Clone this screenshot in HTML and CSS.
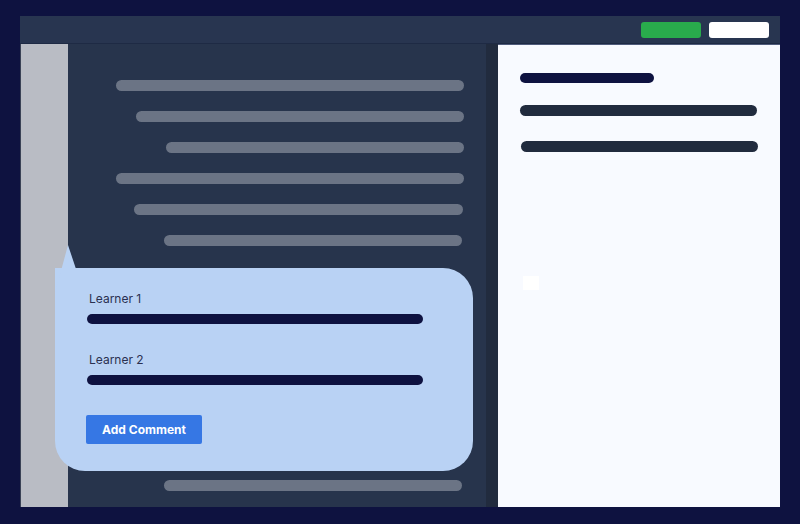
FILE: index.html
```html
<!DOCTYPE html>
<html>
<head>
<meta charset="utf-8">
<link rel="stylesheet" href="styles.css">
</head>
<body>
<div class="frame">
  <div class="topbar">
    <span class="btn-green"></span>
    <span class="btn-white"></span>
  </div>
  <div class="main">
    <div class="gutter"></div>
    <div class="editor">
      <div class="lines">
        <div class="line" style="margin-left:48px;width:348px"></div>
        <div class="line" style="margin-left:68px;width:328px"></div>
        <div class="line" style="margin-left:98px;width:298px"></div>
        <div class="line" style="margin-left:48px;width:348px"></div>
        <div class="line" style="margin-left:66px;width:329px"></div>
        <div class="line" style="margin-left:96px;width:298px"></div>
      </div>
      <div class="line last" style="margin-left:96px;width:298px"></div>
    </div>
    <div class="divider"></div>
    <div class="preview">
      <div class="pline title"></div>
      <div class="pline"></div>
      <div class="pline second"></div>
      <div class="square"></div>
    </div>
  </div>
  <div class="bubble">
    <svg class="tail" width="30" height="50" viewBox="0 0 30 50"><polygon points="0,48 13,0 21,24 30,24 30,50 0,50" fill="#b9d2f4"/></svg>
    <div class="comment">
      <div class="name">Learner 1</div>
      <div class="bar"></div>
    </div>
    <div class="comment">
      <div class="name">Learner 2</div>
      <div class="bar"></div>
    </div>
    <button class="add">Add Comment</button>
  </div>
</div>
</body>
</html>
```
FILE: styles.css
```css
html, body {
  margin: 0;
  padding: 0;
  background: #0e1240;
  font-family: Inter, "Noto Sans", sans-serif;
}
.frame {
  position: relative;
  margin: 16px 20px 0 20px;
  width: 760px;
  height: 491px;
  display: flex;
  flex-direction: column;
}
.topbar {
  height: 28px;
  background: #283550;
  display: flex;
  justify-content: flex-end;
  align-items: flex-start;
  gap: 8px;
  padding: 6px 11px 0 0;
  box-sizing: border-box;
  border-bottom: 1px solid #1e2a44;
}
.btn-green {
  width: 60px;
  height: 16px;
  background: #29ab4c;
  border-radius: 3px;
}
.btn-white {
  width: 60px;
  height: 16px;
  background: #ffffff;
  border-radius: 3px;
}
.main {
  flex: 1;
  display: flex;
}
.gutter {
  width: 47px;
  background: #b9bcc4;
  border-left: 1px solid #3a4256;
}
.editor {
  width: 418px;
  background: #27344c;
  display: flex;
  flex-direction: column;
}
.lines {
  display: flex;
  flex-direction: column;
  gap: 20px;
  padding-top: 36px;
}
.line {
  height: 11px;
  border-radius: 6px;
  background: #6b7485;
}
.line.last {
  margin-top: auto;
  margin-bottom: 16px;
}
.divider {
  width: 12px;
  background: #212b3e;
}
.preview {
  flex: 1;
  background: #f8faff;
  border-top: 1px solid #4e5a7a;
  display: flex;
  flex-direction: column;
  padding: 28px 22px 0 22px;
}
.pline {
  height: 11px;
  border-radius: 6px;
  background: #212b3e;
  width: 237px;
  margin-bottom: 25px;
}
.pline.title {
  width: 134px;
  height: 10px;
  background: #0e1240;
  margin-bottom: 22px;
}
.pline.second {
  margin-left: 1px;
  margin-bottom: 124px;
}
.square {
  width: 16px;
  height: 14px;
  background: #ffffff;
  margin-left: 3px;
}
.bubble {
  position: absolute;
  left: 35px;
  top: 252px;
  width: 418px;
  height: 203px;
  box-sizing: border-box;
  background: #b9d2f4;
  border-radius: 0 30px 30px 30px;
  padding: 24px 0 0 32px;
  display: flex;
  flex-direction: column;
}
.tail {
  position: absolute;
  left: 0;
  top: -23px;
}
.comment {
  display: flex;
  flex-direction: column;
  margin-bottom: 29px;
}
.name {
  font-size: 12px;
  line-height: 14px;
  color: #2a3050;
  margin-left: 2px;
  margin-bottom: 8px;
}
.bar {
  width: 336px;
  height: 10px;
  border-radius: 5px;
  background: #0e1240;
}
.add {
  align-self: flex-start;
  margin-top: 1px;
  width: 116px;
  height: 29px;
  border: none;
  border-radius: 2px;
  background: #3677e4;
  color: #ffffff;
  font-family: Inter, "Noto Sans", sans-serif;
  font-weight: 700;
  font-size: 12px;
  padding: 0;
  margin-left: -1px;
}
```
